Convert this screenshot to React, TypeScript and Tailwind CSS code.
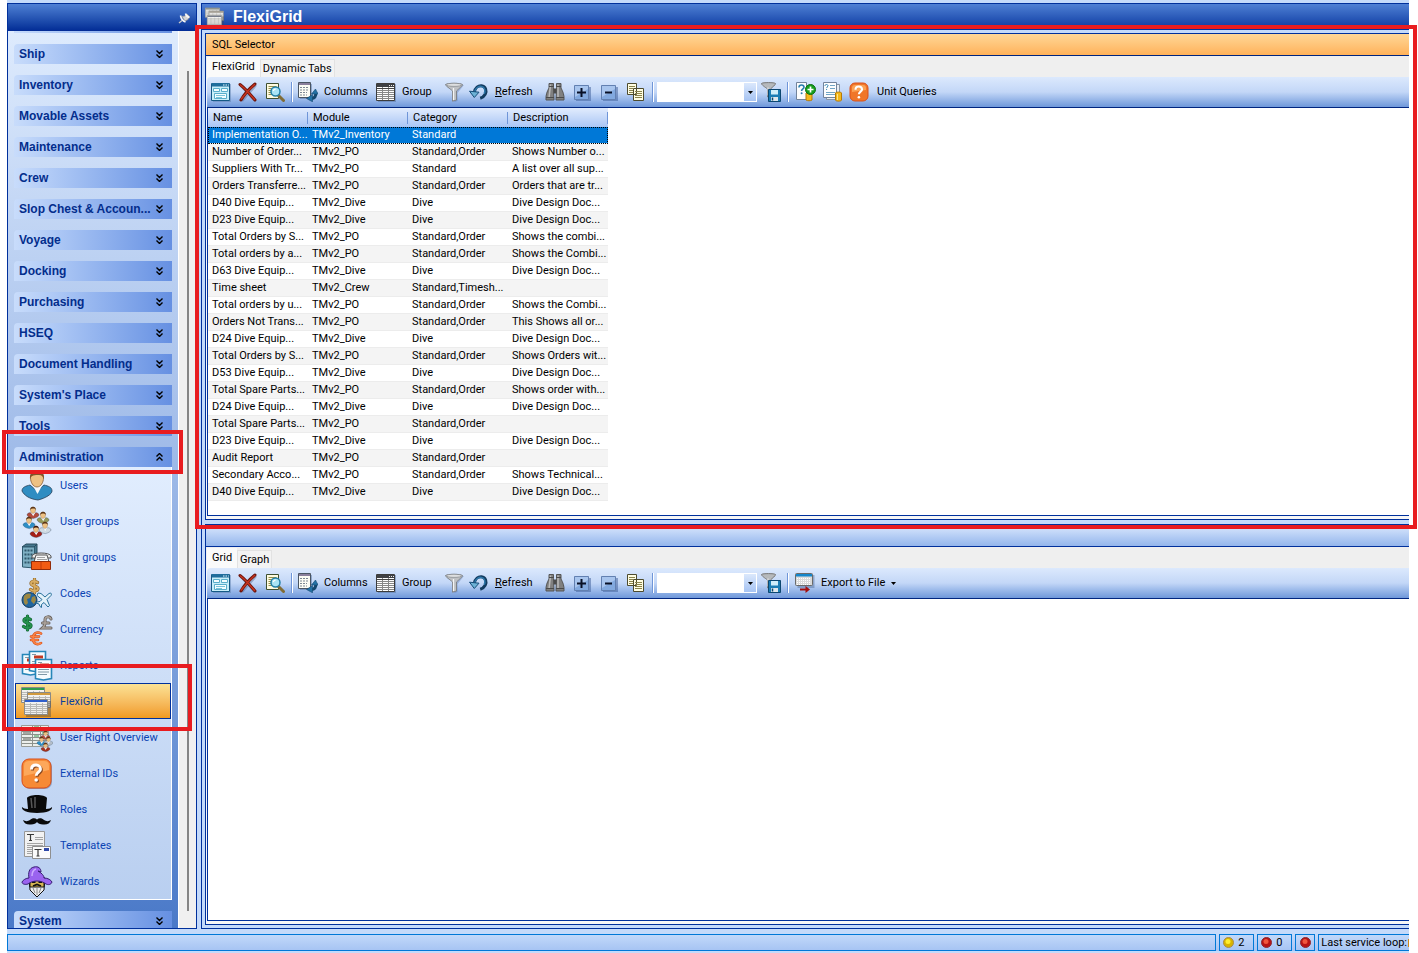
import { useState, type ReactNode } from 'react'

type Row = [name: string, module: string, category: string, description: string]

const DIVE_DESC = 'Dive Design Doc...'

const ROWS: Row[] = [
  ['Implementation O...', 'TMv2_Inventory', 'Standard', ''],
  ['Number of Order...', 'TMv2_PO', 'Standard,Order', 'Shows Number o...'],
  ['Suppliers With Tr...', 'TMv2_PO', 'Standard', 'A list over all sup...'],
  ['Orders Transferre...', 'TMv2_PO', 'Standard,Order', 'Orders that are tr...'],
  ['D40 Dive Equip...', 'TMv2_Dive', 'Dive', DIVE_DESC],
  ['D23 Dive Equip...', 'TMv2_Dive', 'Dive', DIVE_DESC],
  ['Total Orders by S...', 'TMv2_PO', 'Standard,Order', 'Shows the combi...'],
  ['Total orders by a...', 'TMv2_PO', 'Standard,Order', 'Shows the Combi...'],
  ['D63 Dive Equip...', 'TMv2_Dive', 'Dive', DIVE_DESC],
  ['Time sheet', 'TMv2_Crew', 'Standard,Timesh...', ''],
  ['Total orders by u...', 'TMv2_PO', 'Standard,Order', 'Shows the Combi...'],
  ['Orders Not Trans...', 'TMv2_PO', 'Standard,Order', 'This Shows all or...'],
  ['D24 Dive Equip...', 'TMv2_Dive', 'Dive', DIVE_DESC],
  ['Total Orders by S...', 'TMv2_PO', 'Standard,Order', 'Shows Orders wit...'],
  ['D53 Dive Equip...', 'TMv2_Dive', 'Dive', DIVE_DESC],
  ['Total Spare Parts...', 'TMv2_PO', 'Standard,Order', 'Shows order with...'],
  ['D24 Dive Equip...', 'TMv2_Dive', 'Dive', DIVE_DESC],
  ['Total Spare Parts...', 'TMv2_PO', 'Standard,Order', ''],
  ['D23 Dive Equip...', 'TMv2_Dive', 'Dive', DIVE_DESC],
  ['Audit Report', 'TMv2_PO', 'Standard,Order', ''],
  ['Secondary Acco...', 'TMv2_PO', 'Standard,Order', 'Shows Technical...'],
  ['D40 Dive Equip...', 'TMv2_Dive', 'Dive', DIVE_DESC],
]

const SECTIONS = [
  'Ship', 'Inventory', 'Movable Assets', 'Maintenance', 'Crew', 'Slop Chest & Accoun...', 'Voyage',
  'Docking', 'Purchasing', 'HSEQ', 'Document Handling', "System's Place", 'Tools',
]

/* ---------- toolbar icons, 20x20 ---------- */

function Icon({ size = 20, children }: { size?: number; children: ReactNode }) {
  return (
    <svg width={size} height={size} viewBox={`0 0 ${size} ${size}`} fill="none" className="shrink-0" aria-hidden="true">
      {children}
    </svg>
  )
}

const NewIcon = () => (
  <Icon>
    <path d="M2 2h18v18H2z" fill="#5d7fae" opacity=".5" />
    <path d="M.5 1.500h18v17H.5z" fill="#c9eef9" stroke="#155a86" />
    <path d="M1 1h17v3.500H1z" fill="#1f6d9c" />
    <path d="M12 3h1.500M14.500 3H16M17 3h.8" stroke="#e8fbff" />
    <path d="M2.500 6.500h6v3h-6zM10.500 6.500h6v3h-6zM3.500 11.500h12v5h-12z" fill="#f4fdff" stroke="#5aaecb" />
    <path d="M5 13.500h9M5 15.500h6" stroke="#7cc4d9" />
  </Icon>
)

const DeleteIcon = () => (
  <Icon>
    <path d="M3 4l14 15M18 3L4 19" stroke="#4b5f86" strokeWidth="2.500" opacity=".4" />
    <path d="M2 2.500c4 3 9.500 9 15 15.500M17 2C11.500 6.500 6.500 12 3 18" stroke="#6d150c" strokeWidth="3" strokeLinecap="round" />
    <path d="M2.500 3c4 3 9 8.500 14 14.500M16.500 2.500C11.500 7 7 12 3.300 17" stroke="#c7331f" strokeWidth="1.500" strokeLinecap="round" />
  </Icon>
)

const PreviewIcon = () => (
  <Icon>
    <path d="M1.500 1.500h12v15h-12z" fill="#fffbe0" stroke="#3f5030" />
    <path d="M3.500 4.500h8M3.500 6.500h4M3.500 8.500h3M3.500 10.500h3M3.500 12.500h4" stroke="#958f4c" />
    <path d="M13 13l5.500 5.500" stroke="#806c36" strokeWidth="3" strokeLinecap="round" />
    <circle cx="10.500" cy="9.500" r="4.500" fill="#a9e4f5" stroke="#2380a8" strokeWidth="1.500" />
    <path d="M8.300 9c.3-1.300 1.300-2 2.500-2" stroke="#fff" strokeWidth="1.200" />
  </Icon>
)

const ColumnsIcon = () => (
  <Icon>
    <path d="M2 2h12v15H2z" fill="#54719f" opacity=".5" />
    <path d="M.5.500h12v15H.5z" fill="#fcfcf4" stroke="#4a5563" />
    <path d="M1 1h11v2H1z" fill="#8a7f9c" />
    <path d="M2 5.500h9M2 8h9M2 10.500h7M2 13h7" stroke="#7d8894" strokeDasharray="2 1" />
    <path d="M17.700 10.500c.6 4-1.500 6-4.200 6" stroke="#13466e" strokeWidth="3.200" />
    <path d="M14.500 12.500L8.500 16.500l6 3.300zM13.500 12l4-5 2.500 5z" fill="#2371a5" stroke="#13466e" strokeWidth=".6" />
  </Icon>
)

const GroupIcon = () => (
  <Icon>
    <path d="M2 2h18v18H2z" fill="#54719f" opacity=".5" />
    <path d="M.5 1.500h18v17H.5z" fill="#fff" stroke="#3c3c3c" />
    <path d="M1 2h17v3H1z" fill="#3f4145" />
    <path d="M13 3.500h1M15 3.500h1M17 3.500h1" stroke="#eee" />
    <path d="M1 6.500h17M1 8.500h17M1 10.500h17M1 12.500h17M1 14.500h17M1 16.500h17M6.500 5v13M12.500 5v13" stroke="#888" />
    <path d="M1 6.500h17" stroke="#444" />
  </Icon>
)

const FunnelIcon = () => (
  <Icon>
    <path d="M3 3h17l-6.500 8v8l-3 1v-9z" fill="#45619a" opacity=".35" />
    <path d="M1.500 2.500c2-1.500 15-1.500 17 0 0 1.500-3.500 4-6 6.500V18l-4 1.200V9C6 6.500 1.500 4 1.500 2.500z" fill="#bfc1c4" stroke="#7f8388" />
    <ellipse cx="10" cy="2.800" rx="7.800" ry="1.600" fill="#dedfe0" stroke="#83878b" strokeWidth=".7" />
    <path d="M9.500 6v12" stroke="#f5f5f5" strokeWidth="1.200" />
  </Icon>
)

const RefreshIcon = () => (
  <Icon>
    <path d="M5.300 10.500C6 5.500 9.500 3.500 12.500 3.800c4.300.5 5.500 5 3.700 8.400-1.100 2-2.800 3.300-5 4" stroke="#123b60" strokeWidth="3" />
    <path d="M5.500 10C6.500 6 9.500 4 12.500 4.500c3.300.6 4.200 4.300 2.700 7.200" stroke="#2d76a8" strokeWidth="1.600" />
    <path d="M.5 9.200l9.500 1L5.300 15.500z" fill="#6db2d6" stroke="#174d79" />
  </Icon>
)

const BinocularsIcon = () => (
  <Icon>
    <path d="M4 1.500h4.500v4L9 18H1c-.5-5 1.300-9 3-12zM11.500 1.500H16v4.500c1.700 3 3.500 7 3 12h-8l.5-12.500z" fill="#808080" stroke="#555" />
    <path d="M8.500 6.500h3v5h-3z" fill="#4b4b4b" />
    <path d="M5.500 2.500L4 16M13 2.500V16" stroke="#bcbcbc" strokeWidth="1.500" />
    <path d="M1 15.500h8M11 15.500h8M4 4.500h4.500M11.500 4.500H16" stroke="#4a4a4a" />
  </Icon>
)

function SignIcon({ plus = false }: { plus?: boolean }) {
  return (
    <Icon>
      <path d="M4 5h15v14H4z" fill="#3c5c98" opacity=".5" />
      <path d="M2.500 3.500h14v14h-14z" fill="#82a9df" stroke="#6280b1" />
      <path d="M3 4h13v3L3 15z" fill="#a8c5ee" />
      <path d={plus ? 'M5 10.500h9M9.500 6v9' : 'M6 10.500h7'} stroke="#081026" strokeWidth="2" />
    </Icon>
  )
}

const CopyIcon = () => (
  <Icon>
    <path d="M1.500 1.500h9v11h-9zM7.500 6.500h10v12h-10z" fill="#fffde2" stroke="#4d4b2e" />
    <path d="M3 4.500h6M3 6.500h4M3 8.500h4M3 10.500h4M9 9.500h7M9 11.500h7M9 13.500h7M9 15.500h7" stroke="#8a834b" />
  </Icon>
)

const FilterSaveIcon = () => (
  <Icon>
    <path d="M.5 1.500c1-1.200 13-1.200 14 0 0 1.500-3 3.500-5 5.500v7l-3 .8V7C4 5 .5 3 .5 1.500z" fill="#b6b9bc" stroke="#777" />
    <path d="M7 5.500v8" stroke="#eee" />
    <path d="M7.500 7.500h12v12h-12z" fill="#1b7db4" stroke="#0c4770" />
    <path d="M10 8h7v4.500h-7z" fill="#cfeefa" />
    <path d="M10 15h7v4h-7z" fill="#dfe8ee" />
    <path d="M11.500 15.500v3" stroke="#0c4770" strokeWidth="1.500" />
  </Icon>
)

const QuestionMark = ({ x, y, scale = 1, color }: { x: number; y: number; scale?: number; color: string }) => (
  <g transform={`translate(${x} ${y}) scale(${scale})`}>
    <path d="M0 2.500C0 .8 1 0 2.500 0S5 1 5 2.300C5 4 2.600 4 2.600 6" stroke={color} strokeWidth="1.600" />
    <circle cx="2.600" cy="8.300" r="1" fill={color} />
  </g>
)

const AddQueryIcon = () => (
  <Icon>
    <path d="M.5.500h10v17H.5z" fill="#fdfdfd" stroke="#72839b" />
    <QuestionMark x={3} y={3} color="#2a7fae" />
    <path d="M10 11h6v7c-1.500 1-4.500 1-6 0z" fill="#f4b81b" stroke="#b67a08" />
    <circle cx="14.500" cy="7.500" r="5" fill="#18a01e" stroke="#0a6d10" />
    <path d="M11.500 7.500h6M14.500 4.500v6" stroke="#fff" strokeWidth="1.700" />
  </Icon>
)

const QueryListIcon = () => (
  <Icon>
    <path d="M3.500 2.500h13v15h-13z" fill="#e8edf3" stroke="#8795a7" />
    <path d="M.5.500h13v15H.5z" fill="#fdfdfd" stroke="#72839b" />
    <QuestionMark x={2} y={2.500} scale={0.6} color="#2a7fae" />
    <path d="M7 3.500h5M7 6.500h5M3 10.500h9M3 12.500h9" stroke="#71a5c5" />
    <path d="M12.500 11c0-1.200 6-1.200 6 0v7c0 1.500-6 1.500-6 0z" fill="#f4b81b" stroke="#b67a08" />
    <path d="M14.500 12v6" stroke="#ffe48a" />
  </Icon>
)

const HelpIcon = () => (
  <Icon>
    <rect x="1" y="1" width="18" height="18" rx="5" fill="#f07629" stroke="#d9501a" />
    <path d="M3 10V6q0-3 3-3h8q3 0 3 3v2z" fill="#fba255" />
    <QuestionMark x={6.500} y={4.500} scale={1.300} color="#fff" />
  </Icon>
)

const ExportIcon = () => (
  <Icon>
    <path d="M2.500 2h17v13h-17z" fill="#54719f" opacity=".5" />
    <rect x=".5" y=".5" width="17" height="12" rx="1" fill="#dadada" stroke="#6a6a6a" />
    <path d="M1 1h16v2.500H1z" fill="#1486cb" />
    <path d="M2 5.500h14M2 7.500h14M2 9.500h14M2 11.500h14" stroke="#fff" strokeDasharray="1 1" />
    <path d="M5 16.500h7" stroke="#a30f0f" strokeWidth="2" />
    <path d="M10.500 13l4.500 3.500-4.500 3.500z" fill="#a30f0f" />
  </Icon>
)

/* ---------- sidebar icons, 32x32 ---------- */

function Person({ x, y, scale = 1, body, hair = '#5a3417' }: { x: number; y: number; scale?: number; body: string; hair?: string }) {
  return (
    <g transform={`translate(${x} ${y}) scale(${scale})`}>
      <path d="M0 20c0-4 4-5 8-6l7 6 7-6c4 1 8 2 8 6 0 3-6 7-14 9C7 28 2 24 0 20z" fill={body} stroke="#273e55" strokeWidth=".8" />
      <path d="M10 13l5.500 10L21 13z" fill="#f5f8fb" />
      <path d="M8.500 7c0-4 2.500-7 6.500-7s6.500 3 6.500 7-2.500 9-6.500 9-6.500-5-6.500-9z" fill="#edc183" stroke="#7d4c20" strokeWidth=".7" />
      <path d="M8 8c-.5-5 2-8.500 7-8.500S22.500 3 22 8c-1-2-2-4-5-4-4 0-8 0-9 4z" fill={hair} />
    </g>
  )
}

const UsersIcon = () => <Icon size={32}><Person x={1} y={1} body="#2f8dc2" hair="#80542a" /></Icon>

const UserGroupsIcon = () => (
  <Icon size={32}>
    <Person x={6} y={1} scale={0.4} body="#b24a3c" />
    <Person x={16} y={6} scale={0.4} body="#95995a" />
    <Person x={2} y={11} scale={0.4} body="#2e8fc6" />
    <Person x={18} y={16} scale={0.4} body="#cfdbe4" />
    <Person x={9} y={20} scale={0.4} body="#a51f16" hair="#3b170b" />
  </Icon>
)

const UnitGroupsIcon = () => (
  <Icon size={32}>
    <path d="M1 5l4-3h11l-3 3zM13 5l3-3v12h-3z" fill="#47788e" stroke="#284b5c" />
    <path d="M1.500 5h12v21l-12-1z" fill="#7fb0c4" stroke="#305a6e" />
    <path d="M3.500 8.500H12M3.500 12.500H12M3.500 16.500H12M3.500 20.500H12" stroke="#31576a" strokeWidth="2" strokeDasharray="2 1" />
    <path d="M11 14c0-4 18-4 19 0v2h-5v-2h-9v2h-5z" fill="#e8e8e8" stroke="#535353" />
    <path d="M15 13h11l2 7H13z" fill="#f7f7f7" stroke="#555" />
    <path d="M16.500 15.500h8M16.500 17.500h9" stroke="#4d4d4d" strokeDasharray="1 1" />
    <path d="M10.500 19.500h19v8h-19z" fill="#f25b13" stroke="#922c0a" />
    <path d="M20 20v7" stroke="#c33d0b" />
  </Icon>
)

const Dollar = ({ x, y, color, edge }: { x: number; y: number; color: string; edge: string }) => (
  <g transform={`translate(${x} ${y})`} strokeLinecap="round">
    <path d="M8.500 3.500C6.500 1.500 2 2 2 4.500c0 3 7 2 7 5 0 2.800-5 3.200-7.500 1M5.500 0v14" stroke={edge} strokeWidth="3.200" />
    <path d="M8.500 3.500C6.500 1.500 2 2 2 4.500c0 3 7 2 7 5 0 2.800-5 3.200-7.500 1M5.500 0v14" stroke={color} strokeWidth="2" />
  </g>
)

const CodesIcon = () => (
  <Icon size={32}>
    <Dollar x={8} y={1} color="#d8ad62" edge="#8c6326" />
    <circle cx="8.500" cy="22" r="7.500" fill="#21659e" stroke="#143a5c" />
    <path d="M3 18c2-3 5-3 7-2l-1 4-3 1 1 4-2 2c-2-1-3-4-2-9zM11 19l3-1 1 4-2 4-3-3z" fill="#9c8743" />
    <path d="M17 15l3 .5 4 3.500 4-3.500c2-1 3 0 2 2l-4 4 2.500 6-1.500 1.500-4-4.500-2.500 2v3l-1.500-1-1-2.500-3-1 1-1 3-.5 2-2-5-4z" fill="#e4f2fa" stroke="#28709a" />
  </Icon>
)

const CurrencyIcon = () => (
  <Icon size={32}>
    <Dollar x={1} y={2} color="#26914e" edge="#0b5f2b" />
    <g strokeLinecap="round">
      <path d="M30 5c-1-3-6-3-6 1 0 3 1 5-2.500 8H30M21.500 9H28" stroke="#625a54" strokeWidth="3" />
      <path d="M30 5c-1-3-6-3-6 1 0 3 1 5-2.500 8H30M21.500 9H28" stroke="#aaa29b" strokeWidth="1.600" />
      <path d="M20 19.500c-4-2.500-8 0-8 5s4 7 8 4.500M10 22.500h8M10 26h7" stroke="#d1470f" strokeWidth="2.600" />
      <path d="M20 19.500c-4-2.500-8 0-8 5s4 7 8 4.500M10 22.500h8M10 26h7" stroke="#fb8345" strokeWidth="1.600" />
    </g>
  </Icon>
)

function ReportPage({ x, y }: { x: number; y: number }) {
  return (
    <g transform={`translate(${x} ${y})`}>
      <path d="M.5.500h16v19l-8 1.500-8-1.500z" fill="#f5fbfe" stroke="#2686b8" strokeWidth="1.600" />
      <path d="M3 3.500h4M3 10.500h11M3 13h11M3 15.500h9" stroke="#7f98a6" />
      <path d="M5 6h9" stroke="#c23a22" strokeWidth="3" />
    </g>
  )
}

const ReportsIcon = () => (
  <Icon size={32}>
    <ReportPage x={1} y={4} />
    <ReportPage x={8} y={1} />
    <ReportPage x={14} y={9} />
  </Icon>
)

function Sheet({ x, y, bar }: { x: number; y: number; bar: string }) {
  return (
    <g transform={`translate(${x} ${y})`}>
      <path d="M.5.500h23v15H.5z" fill="#f1f1ef" stroke="#8a8a86" />
      <path d="M1 1h22v2H1z" fill={bar} />
      <path d="M1 5.500h22M1 7.500h22M1 9.500h22M1 11.500h22M1 13.500h22M6.500 4v11M12.500 4v11M18.500 4v11" stroke="#b9b9b6" />
    </g>
  )
}

const FlexiGridIcon = ({ size = 32, bars = ['#2f9d4d', '#d19a3d', '#2f5fcc'] }: { size?: number; bars?: string[] }) => (
  <svg width={size} height={size} viewBox="0 0 32 32" fill="none" className="shrink-0" aria-hidden="true">
    <Sheet x={0} y={1} bar={bars[0]} />
    <Sheet x={6} y={6} bar={bars[1]} />
    <path d="M5 15h25v16H5z" fill="#444" opacity=".4" />
    <Sheet x={3} y={13} bar={bars[2]} />
  </svg>
)

const RightsIcon = () => (
  <Icon size={32}>
    <path d="M.5 3.500h27v21H.5z" fill="#eceeeb" stroke="#9a9d98" />
    <path d="M1 6.500h26M1 9.500h26M1 12.500h26M1 15.500h26M1 18.500h26M1 21.500h26M11.500 4v20M19.500 4v20" stroke="#8d918c" />
    <path d="M2 8h8M2 11h8M2 17h8M13 8h4" stroke="#5c605b" />
    <path d="M13 5h5M13 14h5M21 11h5" stroke="#3c9a53" />
    <Person x={20} y={9} scale={0.3} body="#b24a3c" />
    <Person x={16} y={15} scale={0.3} body="#2e8fc6" />
    <Person x={23} y={15} scale={0.3} body="#b4bec9" />
    <Person x={20} y={21} scale={0.3} body="#a5301c" />
  </Icon>
)

const ExternalIcon = () => (
  <Icon size={32}>
    <rect x="2" y="2" width="29" height="29" rx="7" fill="#34507c" opacity=".4" />
    <rect x="1" y="1" width="29" height="29" rx="7" fill="#f68a35" stroke="#d84c1b" />
    <path d="M3 18V8q0-5 5-5h15q5 0 5 5v4z" fill="#fda85b" />
    <QuestionMark x={11.500} y={8} scale={1.800} color="#8a4a22" />
    <QuestionMark x={10.500} y={7} scale={1.800} color="#fff" />
  </Icon>
)

const RolesIcon = () => (
  <Icon size={32}>
    <path d="M7 15L6 4c2-4 18-4 20 0l-1 11c3 0 5-1 6-2 1 3-5 6-15 6S0 16 1 13c1 1 3 2 6 2z" fill="#0a0a0a" />
    <path d="M10 4l1 10M14 3v11" stroke="#585858" strokeWidth="1.500" />
    <path d="M16 25.500c2-2 5-1.500 7 .5 2 1.500 5 1.500 7 0-1 3.500-4 5-8 4.500-3 0-5-1-6-2.500-1 1.500-3 2.500-6 2.500-4 .5-7-1-8-4.500 2 1.500 5 1.500 7 0 2-2 5-2.500 7-.5z" fill="#0a0a0a" />
  </Icon>
)

const TemplatesIcon = () => (
  <Icon size={32}>
    <path d="M3.500 1.500h20v25h-20z" fill="#f2f2f2" stroke="#979797" />
    <path d="M6 4.500h7M9.500 4.500v6M8 10.500h3" stroke="#383838" strokeWidth="1.200" />
    <path d="M14 7.500h8M14 9.500h8M6 13.500h16M6 15.500h16M6 17.500h5M6 19.500h5M6 21.500h5M6 23.500h5" stroke="#a4a4a4" />
    <path d="M11.500 16.500h18v12h-18z" fill="#fbfbfb" stroke="#8f8f8f" />
    <path d="M13.500 19.500h7M17 19.500V26M15.500 26h3" stroke="#383838" strokeWidth="1.200" />
    <path d="M23 18h5v3h-5z" fill="#3049a8" />
  </Icon>
)

const WizardsIcon = () => (
  <Icon size={32}>
    <path d="M8 12h16l-1 12-7 7-7-7z" fill="#eee" stroke="#111" />
    <path d="M9 13h14v8H9z" fill="#d7b653" stroke="#111" />
    <path d="M11 16h3.500M17.500 16H21M12 20l4-1.500 4 1.500" stroke="#111" strokeWidth="1.800" />
    <path d="M12 22l2 5M16 21v8M20 22l-2 5" stroke="#8a8a8a" />
    <path d="M8 12C7 7 8 2 13 1c4-1 7 1 7 5l-3-1 3 2c2 2 3 3 3 5 4 0 7 2 8 4-1 3-4 3-6 2-5-4-13-4-18 0-3 1-6 0-6-2 1-2 4-4 7-4z" fill="#9a63ef" stroke="#371d72" />
    <path d="M11 10c0-4 1-6 4-7" stroke="#cbaaff" strokeWidth="1.500" />
  </Icon>
)

const MENU = [
  { label: 'Users', icon: <UsersIcon /> },
  { label: 'User groups', icon: <UserGroupsIcon /> },
  { label: 'Unit groups', icon: <UnitGroupsIcon /> },
  { label: 'Codes', icon: <CodesIcon /> },
  { label: 'Currency', icon: <CurrencyIcon /> },
  { label: 'Reports', icon: <ReportsIcon /> },
  { label: 'FlexiGrid', icon: <FlexiGridIcon /> },
  { label: 'User Right Overview', icon: <RightsIcon /> },
  { label: 'External IDs', icon: <ExternalIcon /> },
  { label: 'Roles', icon: <RolesIcon /> },
  { label: 'Templates', icon: <TemplatesIcon /> },
  { label: 'Wizards', icon: <WizardsIcon /> },
]

/* ---------- sidebar ---------- */

function SectionHeader({ label, open = false }: { label: string; open?: boolean }) {
  return (
    <button
      aria-expanded={open}
      className="flex h-5 w-full shrink-0 items-center justify-between rounded-tl-sm bg-linear-to-r from-[#c8dcfb] to-[#6690e2] pl-[5px] pr-2 font-['Liberation_Sans',sans-serif] text-xs font-bold whitespace-nowrap text-[#032d8c]"
    >
      {label}
      <svg width="9" height="8" viewBox="0 0 9 8" fill="none" stroke="#000" strokeWidth="1.400" aria-hidden="true">
        <path d={open ? 'M1.500 3.500l3-3 3 3M1.500 7.500l3-3 3 3' : 'M1.500.500l3 3 3-3M1.500 4.500l3 3 3-3'} />
      </svg>
    </button>
  )
}

function Sidebar() {
  const [active, setActive] = useState('FlexiGrid')

  return (
    <aside className="flex w-[190px] shrink-0 flex-col overflow-hidden border border-[#00309c]">
      <div className="flex h-[27px] shrink-0 items-center justify-end bg-linear-to-b from-[#4f80d4] to-[#032b95] pr-1.5">
        <button aria-label="Pin">
          <svg width="12" height="12" viewBox="0 0 12 12" fill="none" aria-hidden="true">
            <path d="M4 8.500L1 11" stroke="#c9c9c9" strokeWidth="1.300" />
            <path d="M4 4.500l3-.5 2-2 2.500 2.500-1.500 3-3 1.500z" fill="#d5d5d5" stroke="#999" strokeWidth=".7" />
            <path d="M2.500 3.500c.5 3 2 5.500 5 6.500M7.500 1.500c.5 2 2 3.500 4 4" stroke="#f7f7f7" strokeWidth="1.600" />
          </svg>
        </button>
      </div>
      <div className="flex min-h-0 flex-1">
        <nav className="flex flex-1 flex-col gap-[11px] overflow-hidden border-r border-white bg-linear-to-b from-[#deebfd] via-[#9cb8e7] to-[#4a79c8] px-1.5">
          <div className="h-0.5 shrink-0 bg-linear-to-r from-[#c8dcfb] to-[#6690e2]" />
          {SECTIONS.map((label) => <SectionHeader key={label} label={label} />)}
          <div className="shrink-0">
            <SectionHeader label="Administration" open />
            <ul className="border border-t-0 border-white bg-linear-to-b from-[#e1edfe] to-[#b9cff0]">
              {MENU.map(({ label, icon }) => (
                <li key={label}>
                  <button
                    onClick={() => setActive(label)}
                    className={
                      active === label
                        ? 'flex h-9 w-full items-center gap-[7px] border border-[#00309c] bg-linear-to-b from-[#fbe294] to-[#f09a1e] pt-0.5 pl-[5px] text-[11px] text-[#0a3f9c]'
                        : 'flex h-9 w-full items-center gap-[7px] pt-0.5 pl-1.5 text-[11px] text-[#0b43b3]'
                    }
                  >
                    {icon}
                    {label}
                  </button>
                </li>
              ))}
            </ul>
          </div>
          <SectionHeader label="System" />
        </nav>
        <div className="w-[17px] bg-[#f0f0f0] pt-10 pb-[17px] pl-2">
          <div className="h-full w-0.5 bg-[#858585]" />
        </div>
      </div>
    </aside>
  )
}

/* ---------- main area ---------- */

function Tabs({ names }: { names: string[] }) {
  const [current, setCurrent] = useState(names[0])
  return (
    <div role="tablist" className="flex h-[21px] items-end bg-[#efefef] pl-px">
      {names.map((name) => (
        <button
          key={name}
          role="tab"
          aria-selected={current === name}
          onClick={() => setCurrent(name)}
          className={current === name ? 'h-5 bg-[#fafafa] px-[5px]' : 'h-[18px] border border-b-0 border-[#e2e2e2] bg-[#f3f3f3] px-0.5'}
        >
          {name}
        </button>
      ))}
    </div>
  )
}

const ToolButton = ({ label, children }: { label: string; children: ReactNode }) => (
  <button aria-label={label} className="flex w-[27px] shrink-0 justify-center">{children}</button>
)

const Separator = () => <div className="mx-[3px] h-5 w-0.5 shrink-0 border-r border-white bg-[#6f95d8]" />

function Toolbar({ id, children }: { id: string; children: ReactNode }) {
  return (
    <div className="flex h-[31px] items-center overflow-hidden rounded-tl-sm border-b border-[#00257f] bg-linear-to-b from-[#dce9fd] via-[#c3d7f7] to-[#6f98da] whitespace-nowrap">
      <ToolButton label="New"><NewIcon /></ToolButton>
      <ToolButton label="Delete"><DeleteIcon /></ToolButton>
      <ToolButton label="Preview"><PreviewIcon /></ToolButton>
      <Separator />
      <button className="flex w-[78px] shrink-0 items-center gap-1.5 pl-0.5"><ColumnsIcon />Columns</button>
      <button className="flex w-[66px] shrink-0 items-center gap-1.5 pl-0.5"><GroupIcon />Group</button>
      <ToolButton label="Filter"><FunnelIcon /></ToolButton>
      <button className="flex w-[74px] shrink-0 items-center gap-1.5 pl-0.5">
        <RefreshIcon />
        <span><u>R</u>efresh</span>
      </button>
      <ToolButton label="Find"><BinocularsIcon /></ToolButton>
      <ToolButton label="Expand all"><SignIcon plus /></ToolButton>
      <ToolButton label="Collapse all"><SignIcon /></ToolButton>
      <ToolButton label="Copy"><CopyIcon /></ToolButton>
      <Separator />
      <label htmlFor={id} className="relative h-5 w-[100px] shrink-0">
        <select id={id} aria-label="Saved filter" className="h-5 w-full appearance-none rounded-none bg-white pl-1 outline-none" />
        <span className="pointer-events-none absolute inset-y-px right-px flex w-3 items-center justify-center bg-linear-to-b from-[#dbe8fc] to-[#a6c3f2]">
          <Caret />
        </span>
      </label>
      <ToolButton label="Save filter"><FilterSaveIcon /></ToolButton>
      <Separator />
      {children}
    </div>
  )
}

const Caret = () => (
  <svg width="5" height="3" viewBox="0 0 5 3" aria-hidden="true"><path d="M0 0h5L2.500 3z" fill="#000" /></svg>
)

function QueryTable() {
  const [selected, setSelected] = useState(0)
  return (
    <table className="w-[400px] table-fixed border-separate border-spacing-0 text-left">
      <thead>
        <tr className="h-[19px] bg-linear-to-b from-[#e2ecfd] to-[#aac6f5]">
          {['Name', 'Module', 'Category', 'Description'].map((name) => (
            <th key={name} className="p-0 font-normal">
              <div className="flex h-3 items-center border-r border-[#6f95d8] pl-[5px]">{name}</div>
            </th>
          ))}
        </tr>
      </thead>
      <tbody>
        {ROWS.map((row, i) => (
          <tr
            key={i}
            onClick={() => setSelected(i)}
            className={
              i === selected
                ? 'h-[17px] bg-[#0078d7] text-white outline-1 -outline-offset-1 outline-dotted outline-black'
                : 'h-[17px] bg-white even:bg-[#f4f4f4]'
            }
          >
            {row.map((cell, j) => (
              <td key={j} className="overflow-hidden border-b border-[#ececec] p-0 pl-1 leading-4 whitespace-nowrap">{cell}</td>
            ))}
          </tr>
        ))}
      </tbody>
    </table>
  )
}

function StatusLight({ tone }: { tone: 'yellow' | 'red' }) {
  return (
    <svg width="13" height="13" viewBox="0 0 13 13" aria-hidden="true">
      <circle cx="6.500" cy="6.500" r="5" fill={tone === 'yellow' ? '#d8b400' : '#b81414'} stroke={tone === 'yellow' ? '#a88a4c' : '#8b2a33'} />
      <circle cx="6" cy="5.500" r="2.500" fill={tone === 'yellow' ? '#ffee2e' : '#f0563c'} />
    </svg>
  )
}

export default function App() {
  return (
    <div className="relative h-screen overflow-hidden bg-white pr-[9px] pl-[7px] font-[Roboto,'Liberation_Sans',sans-serif] text-[11px] leading-4 text-black">
      <div className="flex h-full flex-col bg-[#c4dafa] pt-[3px]">
        <div className="flex min-h-0 flex-1 gap-1">
          <Sidebar />
          <main className="flex min-w-0 flex-1 flex-col border-y border-l border-[#00309c]">
            <header className="flex h-[26px] shrink-0 items-center gap-2 border-b border-[#00309c] bg-linear-to-b from-[#4f80d4] to-[#0c37a0] pl-[3px]">
              <FlexiGridIcon size={20} bars={['#77807a', '#8d8677', '#777d8c']} />
              <h1 className="font-['Liberation_Sans',sans-serif] text-base font-bold text-white">FlexiGrid</h1>
            </header>
            <div className="flex min-h-0 flex-1 flex-col gap-1 pt-[3px] pb-[3px] pl-[3px]">
              <section className="relative border-y border-l border-[#00309c] bg-[#f6f6f6] pb-[3px]">
                <h2 className="flex h-[22px] items-center border-b border-[#00257f] bg-linear-to-b from-[#ffd796] to-[#ffb25a] pl-1.5">SQL Selector</h2>
                <Tabs names={['FlexiGrid', 'Dynamic Tabs']} />
                <div className="pl-px">
                  <Toolbar id="selector-filter">
                    <ToolButton label="Add query"><AddQueryIcon /></ToolButton>
                    <ToolButton label="Query list"><QueryListIcon /></ToolButton>
                    <button className="flex shrink-0 items-center gap-2 pl-[3px]"><HelpIcon />Unit Queries</button>
                  </Toolbar>
                  <div className="border-b border-l border-[#00309c] bg-white pb-[14px]">
                    <QueryTable />
                  </div>
                </div>
                <div className="pointer-events-none absolute -top-[9px] -right-[8px] -bottom-[10px] -left-[11px] z-10 border-4 border-[#e81c20]" />
              </section>
              <section className="flex min-h-0 flex-1 flex-col border-y border-l border-[#00309c] bg-[#f6f6f6] pb-[3px]">
                <div className="h-[22px] shrink-0 border-b border-[#00309c] bg-linear-to-b from-[#dbe8fd] to-[#94b6ec]" />
                <Tabs names={['Grid', 'Graph']} />
                <div className="flex min-h-0 flex-1 flex-col pl-px">
                  <Toolbar id="grid-filter">
                    <button className="flex shrink-0 items-center gap-1.5 pl-[3px]">
                      <ExportIcon />
                      Export to File
                      <Caret />
                    </button>
                  </Toolbar>
                  <div className="flex-1 border-b border-l border-[#00309c] bg-white" />
                </div>
              </section>
            </div>
          </main>
        </div>
        <footer className="mt-[5px] mb-0.5 flex h-[17px] shrink-0 gap-[3px] bg-linear-to-b from-[#c4dafa] to-[#a5c3f3] whitespace-nowrap">
          <div className="flex-1 border border-[#0078d7]" />
          <div className="flex w-[35px] items-center gap-[3px] border border-[#0078d7] pl-0.5"><StatusLight tone="yellow" />2</div>
          <div className="flex w-[35px] items-center gap-[3px] border border-[#0078d7] pl-0.5"><StatusLight tone="red" />0</div>
          <div className="flex w-5 items-center justify-center border border-[#0078d7]"><StatusLight tone="red" /></div>
          <div className="flex items-center gap-px border-y border-l border-[#0078d7] pl-0.5">
            Last service loop:
            <span className="h-2 w-px bg-[#d08a1c]" />
          </div>
        </footer>
      </div>
      <div className="pointer-events-none absolute top-[430px] left-0.5 h-11 w-[181px] border-4 border-[#e81c20]" />
      <div className="pointer-events-none absolute top-[664px] left-0.5 h-[67px] w-[190px] border-4 border-[#e81c20]" />
    </div>
  )
}
